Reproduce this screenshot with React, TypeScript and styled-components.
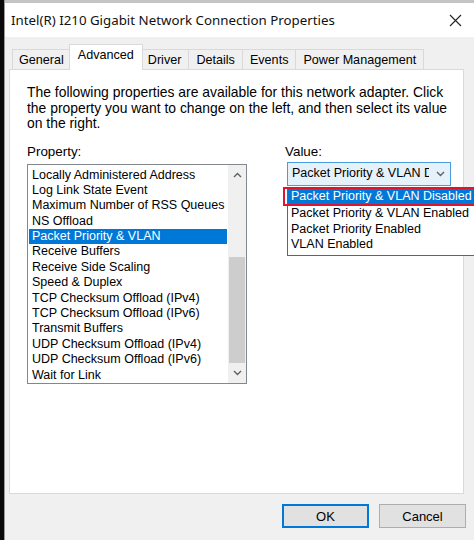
import React from 'react';
import styled, { createGlobalStyle } from 'styled-components';

const GlobalStyle = createGlobalStyle`
	html, body {
		margin: 0;
		padding: 0;
		background: #000;
	}
	body {
		font-family: "Liberation Sans", Arial, sans-serif;
		color: #000;
	}
`;

const Screen = styled.div`
	display: flex;
	width: 474px;
	height: 540px;
	overflow: hidden;
	background: #0a0a0a;
`;

const LeftEdge = styled.div`
	width: 4px;
	flex-shrink: 0;
	background: #0a0a0a;
`;

const Window = styled.div`
	flex: 1;
	min-width: 0;
	display: flex;
	flex-direction: column;
	background: #f0f0f0;
	border-left: 1px solid #9a9a9a;
`;

const BackStrip = styled.div`
	height: 3px;
	background: #c4c4c4;
`;

const TitleBar = styled.div`
	height: 34px;
	display: flex;
	align-items: center;
	justify-content: space-between;
	background: #fff;
	padding: 0 12px 0 6px;
	font-family: "Noto Sans", "Open Sans", sans-serif;
	font-size: 13.3px;
	color: #111;
	white-space: nowrap;
`;

const Body = styled.div`
	flex: 1;
	display: flex;
	flex-direction: column;
	padding: 8px 10px 0 4px;
`;

const TabRow = styled.div`
	display: flex;
	align-items: flex-end;
	height: 25px;
	padding-left: 3px;
	position: relative;
	z-index: 1;
`;

const Tab = styled.div<{ $active?: boolean }>`
	box-sizing: border-box;
	height: ${({ $active }) => ($active ? '26px' : '21px')};
	padding: ${({ $active }) => ($active ? '2px 8px 0' : '2px 7px 0')};
	margin: ${({ $active }) => ($active ? '0 -2px' : '0')};
	background: ${({ $active }) => ($active ? '#fff' : '#f0f0f0')};
	border: 1px solid #d9d9d9;
	border-bottom: ${({ $active }) => ($active ? 'none' : '1px solid #d9d9d9')};
	border-left: ${({ $active }) => ($active ? '1px solid #d9d9d9' : 'none')};
	font-size: 12.6px;
	line-height: 17px;
	white-space: nowrap;
	position: relative;
	z-index: ${({ $active }) => ($active ? 2 : 1)};
	&:first-child {
		border-left: 1px solid #d9d9d9;
		padding: 2px 6px 0;
	}
`;

const Panel = styled.div`
	box-sizing: border-box;
	height: 425px;
	margin-top: -1px;
	background: #fff;
	border: 1px solid #d9d9d9;
	padding: 15px 17px 0 17px;
	font-size: 12.5px;
	line-height: 15.5px;
`;

const Intro = styled.p`
	margin: 0 0 12px;
	width: 424px;
	font-size: 13.9px;
`;

const Columns = styled.div`
	display: flex;
	gap: 38px;
`;

const Column = styled.div<{ $width: number }>`
	display: flex;
	flex-direction: column;
	width: ${({ $width }) => $width}px;
	flex-shrink: 0;
	position: relative;
`;

const Label = styled.div`
	height: 16px;
	margin-bottom: 4px;
	font-size: 13.4px;
`;

const ListBox = styled.div`
	box-sizing: border-box;
	height: 220px;
	display: flex;
	border: 1px solid #828790;
	background: #fff;
`;

const Items = styled.div`
	flex: 1;
	padding: 3px 1px 0 1px;
`;

const Item = styled.div<{ $selected?: boolean }>`
	height: 15.4px;
	line-height: 15.4px;
	padding-left: 3px;
	white-space: nowrap;
	background: ${({ $selected }) => ($selected ? '#0078d7' : 'transparent')};
	color: ${({ $selected }) => ($selected ? '#fff' : '#000')};
`;

const ScrollBar = styled.div`
	width: 18px;
	display: flex;
	flex-direction: column;
	background: #f0f0f0;
`;

const ScrollArrow = styled.div`
	height: 20px;
	display: flex;
	align-items: center;
	justify-content: center;
`;

const ScrollTrack = styled.div`
	flex: 1;
	display: flex;
	flex-direction: column;
	justify-content: flex-end;
	padding: 0 1px;
`;

const Thumb = styled.div`
	height: 106px;
	background: #cdcdcd;
`;

const Combo = styled.div`
	box-sizing: border-box;
	height: 24px;
	width: 164px;
	margin: -2px 0 0 2px;
	display: flex;
	align-items: center;
	border: 1px solid #4b9be0;
	background: #e5f1fb;
	padding: 0 4px 0 4px;
`;

const ComboText = styled.div`
	width: 137px;
	overflow: hidden;
	white-space: nowrap;
	margin-right: 7px;
`;

const DropList = styled.div`
	position: absolute;
	top: 44px;
	left: 2px;
	width: 190px;
	box-sizing: border-box;
	background: #fff;
	border: 1px solid #646464;
	border-top: none;
	padding: 1px 0 2px;
`;

const DropItem = styled.div<{ $selected?: boolean }>`
	height: 15.5px;
	line-height: 15.5px;
	padding-left: 3px;
	white-space: nowrap;
	position: relative;
	background: ${({ $selected }) => ($selected ? '#0078d7' : 'transparent')};
	color: ${({ $selected }) => ($selected ? '#fff' : '#000')};
	margin-bottom: ${({ $selected }) => ($selected ? '2px' : '0')};
`;

const Highlight = styled.div`
	position: absolute;
	left: -5px;
	top: -2px;
	right: -2px;
	bottom: -2px;
	border: 2px solid #e0142c;
`;

const Footer = styled.div`
	display: flex;
	justify-content: flex-end;
	gap: 10px;
	padding: 10px 0 0;
	margin-right: -2px;
`;

const Button = styled.button<{ $default?: boolean }>`
	box-sizing: border-box;
	width: 87px;
	height: 24px;
	background: #e1e1e1;
	border: ${({ $default }) => ($default ? '2px solid #0078d7' : '1px solid #adadad')};
	font-family: "Liberation Sans", Arial, sans-serif;
	font-size: 13px;
	color: #000;
	padding: 0;
`;

const properties = [
	'Locally Administered Address',
	'Log Link State Event',
	'Maximum Number of RSS Queues',
	'NS Offload',
	'Packet Priority & VLAN',
	'Receive Buffers',
	'Receive Side Scaling',
	'Speed & Duplex',
	'TCP Checksum Offload (IPv4)',
	'TCP Checksum Offload (IPv6)',
	'Transmit Buffers',
	'UDP Checksum Offload (IPv4)',
	'UDP Checksum Offload (IPv6)',
	'Wait for Link',
];

const values = [
	'Packet Priority & VLAN Disabled',
	'Packet Priority & VLAN Enabled',
	'Packet Priority Enabled',
	'VLAN Enabled',
];

const tabs = ['General', 'Advanced', 'Driver', 'Details', 'Events', 'Power Management'];

const Chevron = ({ up }: { up?: boolean }) => (
	<svg width="9" height="6" viewBox="0 0 9 6">
		<path
			d={up ? 'M1 5 L4.5 1.5 L8 5' : 'M1 1 L4.5 4.5 L8 1'}
			fill="none"
			stroke="#606060"
			strokeWidth="1.4"
		/>
	</svg>
);

export default function App() {
	return (
		<Screen>
			<GlobalStyle />
			<LeftEdge />
			<Window>
				<BackStrip />
				<TitleBar>
					<span>Intel(R) I210 Gigabit Network Connection Properties</span>
					<svg width="13" height="13" viewBox="0 0 13 13">
						<path d="M1 1 L12 12 M12 1 L1 12" stroke="#222" strokeWidth="1.1" />
					</svg>
				</TitleBar>
				<Body>
					<TabRow>
						{tabs.map((t) => (
							<Tab key={t} $active={t === 'Advanced'}>
								{t}
							</Tab>
						))}
					</TabRow>
					<Panel>
						<Intro>
							The following properties are available for this network adapter. Click
							the property you want to change on the left, and then select its value
							on the right.
						</Intro>
						<Columns>
							<Column $width={220}>
								<Label>Property:</Label>
								<ListBox>
									<Items>
										{properties.map((p) => (
											<Item key={p} $selected={p === 'Packet Priority & VLAN'}>
												{p}
											</Item>
										))}
									</Items>
									<ScrollBar>
										<ScrollArrow>
											<Chevron up />
										</ScrollArrow>
										<ScrollTrack>
											<Thumb />
										</ScrollTrack>
										<ScrollArrow>
											<Chevron />
										</ScrollArrow>
									</ScrollBar>
								</ListBox>
							</Column>
							<Column $width={160}>
								<Label>Value:</Label>
								<Combo>
									<ComboText>Packet Priority &amp; VLAN Disabled</ComboText>
									<Chevron />
								</Combo>
								<DropList>
									{values.map((v, i) => (
										<DropItem key={v} $selected={i === 0}>
											{v}
											{i === 0 && <Highlight />}
										</DropItem>
									))}
								</DropList>
							</Column>
						</Columns>
					</Panel>
					<Footer>
						<Button $default>OK</Button>
						<Button>Cancel</Button>
					</Footer>
				</Body>
			</Window>
		</Screen>
	);
}
